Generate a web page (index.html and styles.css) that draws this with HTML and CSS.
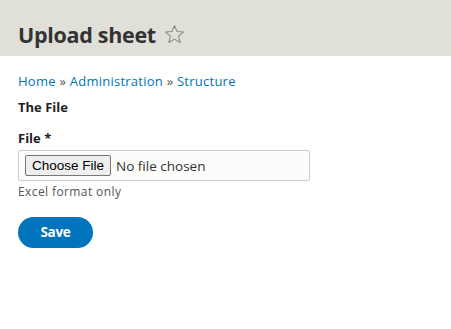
FILE: index.html
```html
<!DOCTYPE html>
<html>
<head>
<meta charset="utf-8">
<link rel="stylesheet" href="styles.css">
</head>
<body>
<header class="page-header">
  <h1 class="page-title">Upload sheet <span class="shortcut">
    <svg width="21" height="21" viewBox="0 0 20 20"><path d="M10 1.6 L12.5 7.2 L18.5 7.7 L13.9 11.6 L15.3 17.6 L10 14.4 L4.7 17.6 L6.1 11.6 L1.5 7.7 L7.5 7.2 Z" fill="none" stroke="#8a8a85" stroke-width="1" stroke-linejoin="round"/></svg>
  </span></h1>
</header>
<main class="content">
  <nav class="breadcrumb"><a href="#">Home</a> » <a href="#">Administration</a> » <a href="#">Structure</a></nav>
  <h2 class="section-title">The File</h2>
  <form class="form">
    <label class="field-label" for="file">File <span class="req">*</span></label>
    <div class="file-box">
      <span class="file-btn">Choose File</span><span class="file-text">No file chosen</span>
    </div>
    <div class="description">Excel format only</div>
    <button type="button" class="save">Save</button>
  </form>
</main>
</body>
</html>
```
FILE: styles.css
```css
html, body { margin: 0; padding: 0; background: #fff; }
body { font-family: "Open Sans", "DejaVu Sans", sans-serif; color: #333; width: 451px; height: 329px; overflow: hidden; }
.page-header { background: #e0e0d8; height: 56px; padding: 12px 18px 0; box-sizing: border-box; display: flex; align-items: center; }
.page-title { margin: 0; font-size: 21.5px; font-weight: 700; color: #333; display: flex; align-items: center; letter-spacing: -0.3px; }
.shortcut { display: inline-flex; margin-left: 8px; }
.content { padding: 16px 18px 0; }
.breadcrumb { font-size: 13px; line-height: 18px; color: #555; letter-spacing: 0.25px; }
.breadcrumb a { color: #0074bd; text-decoration: none; }
.section-title { font-size: 13px; font-weight: 700; margin: 8px 0 0; line-height: 18px; color: #222; }
.form { display: flex; flex-direction: column; align-items: flex-start; margin-top: 13px; }
.field-label { font-size: 13px; font-weight: 700; line-height: 18px; color: #222; }
.req { font-weight: 700; }
.file-box { margin-top: 3px; width: 292px; height: 31px; box-sizing: border-box; border: 1px solid #ccc; border-radius: 2px; background: #fcfcfa; display: flex; align-items: center; padding-left: 6px; }
.file-btn { font-family: "Liberation Sans", Arial, sans-serif; font-size: 13.5px; color: #000; background: #efefef; border: 1px solid #767676; border-radius: 2px; height: 21px; box-sizing: border-box; padding: 0 6px; display: flex; align-items: center; }
.file-text { font-size: 13.5px; color: #333; margin-left: 5px; }
.description { font-size: 12px; color: #555; margin-top: 3px; line-height: 16px; letter-spacing: 0.4px; }
.save { margin-top: 17px; width: 75px; height: 31px; border: 0; border-radius: 16px; background: #0074bd; color: #fff; font-family: "Open Sans", sans-serif; font-weight: 700; font-size: 13.5px; letter-spacing: -0.3px; cursor: pointer; padding-bottom: 2px; }
```
